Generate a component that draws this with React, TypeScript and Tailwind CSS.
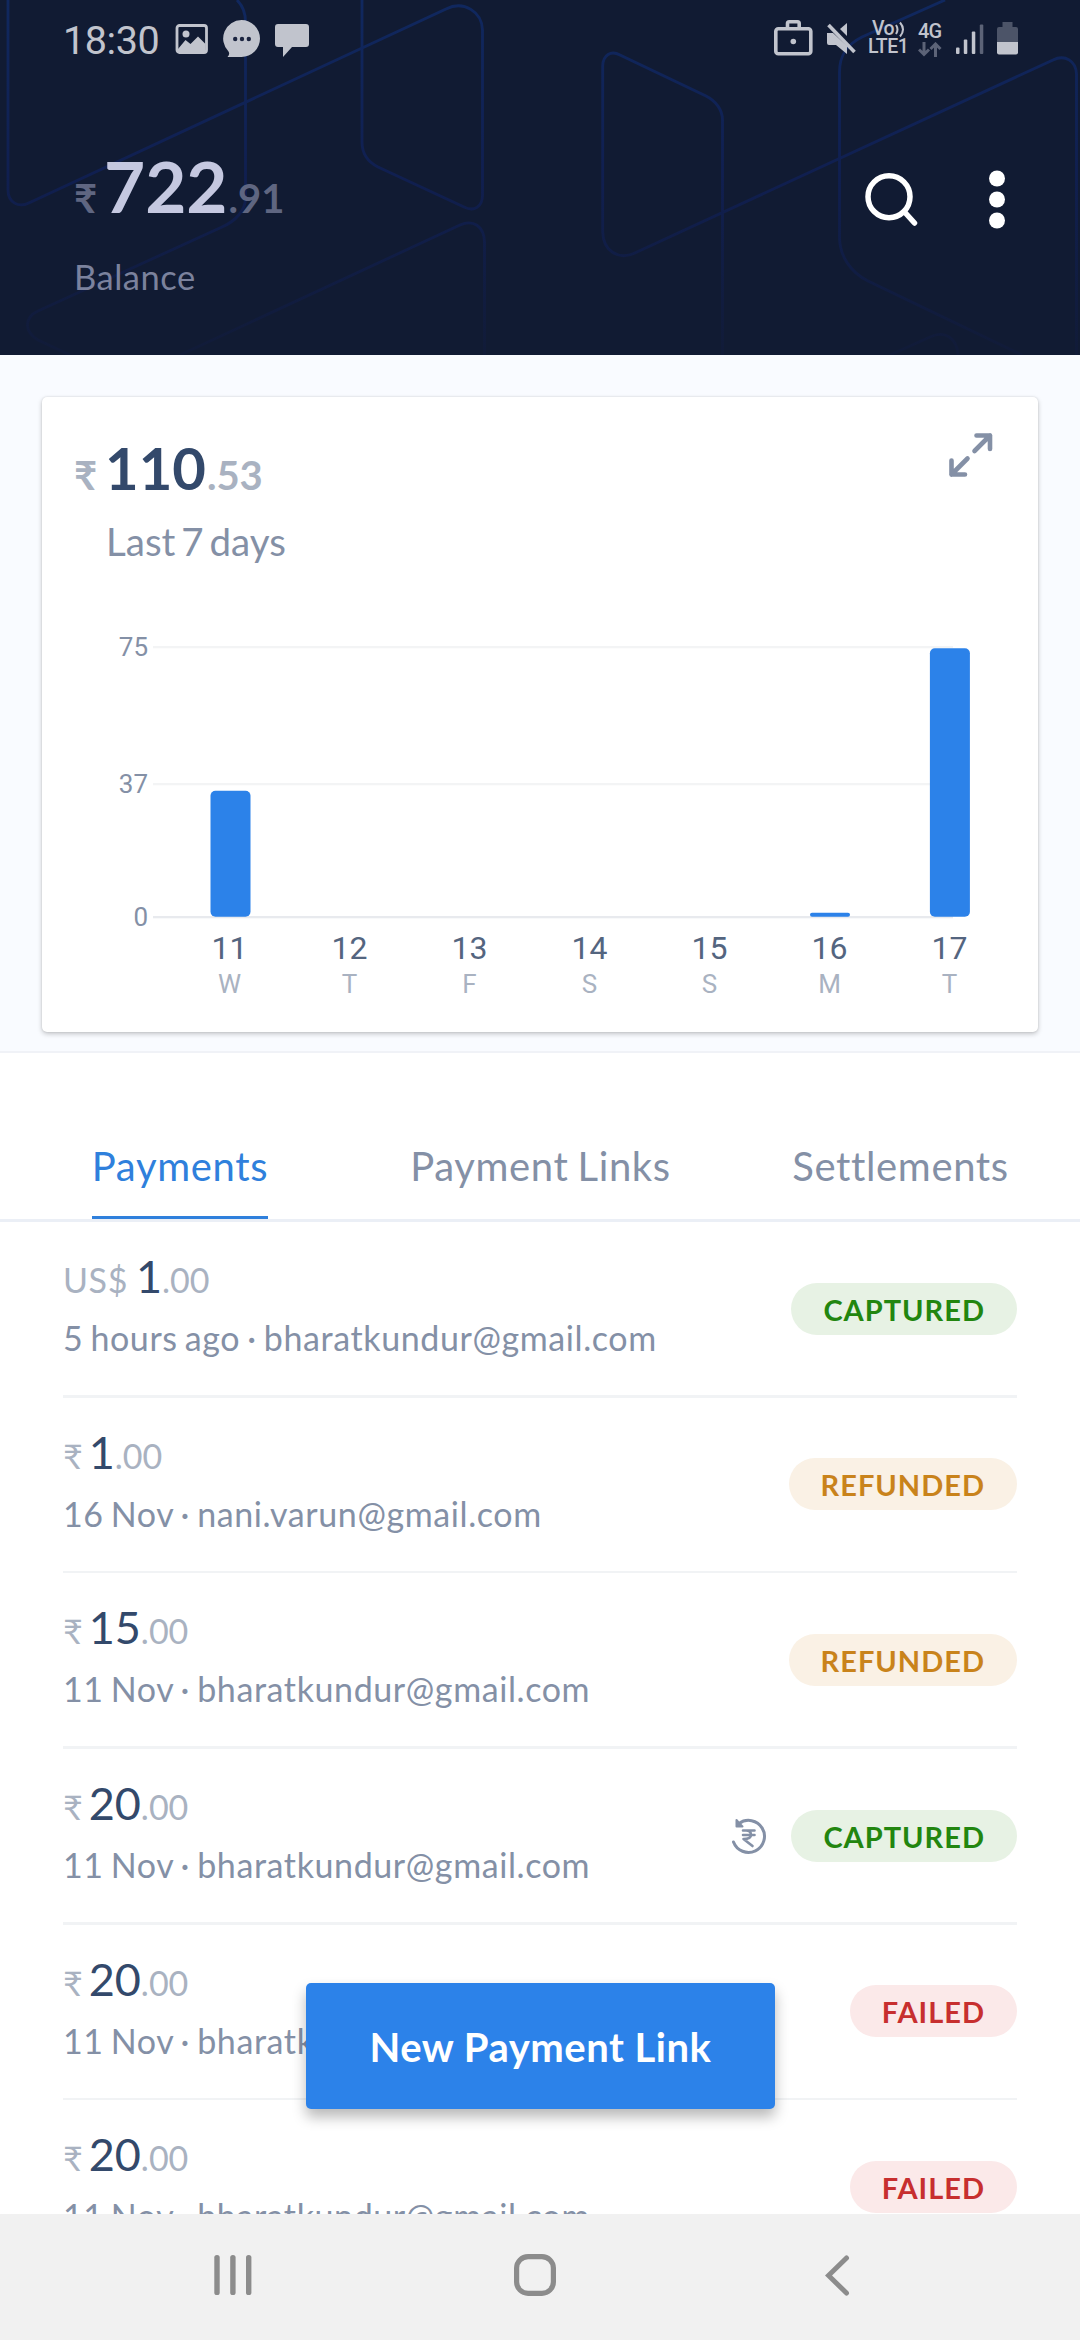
const days = [
  { date: "11", day: "W", height: 126 },
  { date: "12", day: "T", height: 0 },
  { date: "13", day: "F", height: 0 },
  { date: "14", day: "S", height: 0 },
  { date: "15", day: "S", height: 0 },
  { date: "16", day: "M", height: 4 },
  { date: "17", day: "T", height: 268.5 },
];

const gridLines = [
  { label: "75", y: 37, color: "#f3f4f5" },
  { label: "37", y: 174, color: "#f3f4f5" },
  { label: "0", y: 307, color: "#e8eaee" },
];

const payments = [
  { currency: "US$", amount: "1", when: "5 hours ago", email: "bharatkundur@gmail.com", status: "CAPTURED" },
  { currency: "₹", amount: "1", when: "16 Nov", email: "nani.varun@gmail.com", status: "REFUNDED" },
  { currency: "₹", amount: "15", when: "11 Nov", email: "bharatkundur@gmail.com", status: "REFUNDED" },
  { currency: "₹", amount: "20", when: "11 Nov", email: "bharatkundur@gmail.com", status: "CAPTURED", refund: true },
  { currency: "₹", amount: "20", when: "11 Nov", email: "bharatkundur@gmail.com", status: "FAILED" },
  { currency: "₹", amount: "20", when: "11 Nov", email: "bharatkundur@gmail.com", status: "FAILED" },
];

const badgeColors: Record<string, string> = {
  CAPTURED: "bg-[#e7f2e4] text-[#22860f]",
  REFUNDED: "bg-[#faf1e5] text-[#c9831b]",
  FAILED: "bg-[#fbe9e9] text-[#c72f2f]",
};

function HeaderPattern() {
  return (
    <svg className="absolute inset-0" width="1080" height="355" viewBox="0 0 1080 355" fill="none">
      <defs>
        <linearGradient id="fade" gradientUnits="userSpaceOnUse" x1="0" y1="0" x2="0" y2="355">
          <stop offset="0" stopColor="#10285f" />
          <stop offset="0.5" stopColor="#101f50" />
          <stop offset="1" stopColor="#111b38" />
        </linearGradient>
      </defs>
      <g stroke="url(#fade)" strokeWidth="2.8">
        <path d="M8 0V190C8 202 18 209 31 202L446 9C464 0 482 12 482.500 30V195C482.500 207 474 212 464 207L378 167C368 162 362 153 362 142V0" />
        <path d="M237 0C243 6 245.500 13 245.500 22V198C245.500 210 236 221 222 227L38 311C25 317 23 331 38 340L70 355" />
        <path d="M180 355L460 225C473 219 484 226 484.500 242V355" />
        <path d="M722.500 355V120C722.500 110 716 101 706 96L620 55C611 50 603 55 602.700 66V232C603 250 618 262 637 252L1053 60C1065 54 1076 61 1076.500 74V355" />
        <path d="M945 0L862 37C846 45 839.500 56 839.500 72V238C840 256 850 272 868 281L1022 355" />
        <path d="M890 355L930 337C945 330 957 338 958 355" />
      </g>
    </svg>
  );
}

function StatusBar() {
  return (
    <div className="relative flex h-20 items-start text-[#c1c4cd]">
      <span className="ml-[63px] w-[112px] font-[Roboto,sans-serif] text-[39.500px] leading-[81px] tracking-[-0.4px]">18:30</span>
      <svg className="mt-6 shrink-0" width="33" height="30" viewBox="0 0 33 30">
        <rect x="2" y="1.500" width="29.500" height="27" rx="2.500" fill="none" stroke="currentColor" strokeWidth="2.800" />
        <circle cx="11" cy="10" r="3.500" fill="currentColor" />
        <path d="M3 25L10.500 16L15.500 20L23 12.500L30.500 20V28H3Z" fill="currentColor" />
      </svg>
      <svg className="ml-[15px] mt-5 shrink-0" width="38" height="38" viewBox="0 0 38 38">
        <path d="M18.500 0A18.500 18.500 0 1 1 18.500 37H4.500C6.500 35 6.500 33 5.500 31.500A18.500 18.500 0 0 1 18.500 0Z" fill="currentColor" />
        <g fill="#1b2440">
          <circle cx="12.200" cy="19" r="2.200" />
          <circle cx="19" cy="19" r="2.200" />
          <circle cx="25.800" cy="19" r="2.200" />
        </g>
      </svg>
      <svg className="ml-[14px] mt-6 shrink-0" width="34" height="34" viewBox="0 0 34 34">
        <path d="M3 0H31Q34 0 34 3V20Q34 23 31 23H17L8 33V23H3Q0 23 0 20V3Q0 0 3 0Z" fill="currentColor" />
      </svg>

      <div className="mr-[62px] ml-auto flex">
        <svg className="mt-5 shrink-0" width="39" height="37" viewBox="0 0 39 37" fill="none" stroke="currentColor" strokeWidth="3.600">
          <rect x="1.800" y="8.800" width="35" height="25" rx="2.500" />
          <path d="M13.500 8V3.500Q13.500 1.800 15.200 1.800H23.500Q25.200 1.800 25.200 3.500V8" />
          <circle cx="19.300" cy="21.500" r="2.800" fill="currentColor" stroke="none" />
        </svg>
        <svg className="ml-[13px] mt-[22px] shrink-0" width="31" height="33" viewBox="0 0 31 33">
          <path d="M1 11H7L21 24V32L10 23H3Q1 23 1 21Z" fill="currentColor" />
          <path d="M21 1V14L14 7Z" fill="currentColor" />
          <path d="M2.500 3L28.500 30" stroke="currentColor" strokeWidth="3.600" />
        </svg>
        <div className="ml-[11px] mt-[20px] w-[40px] font-[Roboto,sans-serif] text-[19.500px] font-medium leading-[18px]">
          <div className="flex pl-[4px] tracking-[-0.6px]">
            Vo
            <svg className="ml-px mt-[1px]" width="11" height="17" viewBox="0 0 11 17" fill="none" stroke="currentColor" strokeWidth="2">
              <path d="M1 4Q4 8.500 1 13M5 1.500Q11 8.500 5 15.500" />
            </svg>
          </div>
          <div className="tracking-[-0.4px]">LTE1</div>
        </div>
        <div className="ml-[10px] mt-[22px] w-[24px] font-[Roboto,sans-serif] text-[20px] font-medium leading-[18px]">
          <div className="tracking-[-0.8px]">4G</div>
          <svg className="mt-[2px] text-[#5c6377]" width="24" height="15" viewBox="0 0 24 15" fill="none" stroke="currentColor" strokeWidth="3">
            <path d="M6 0V12M1 7.500L6 12.500L11 7.500M17.500 15V3M12.500 7L17.500 2L22.500 7" />
          </svg>
        </div>
        <svg className="ml-[14px] mt-6 shrink-0" width="28" height="31" viewBox="0 0 28 31" fill="currentColor">
          <rect x="0" y="23.500" width="3.500" height="6.500" rx="1" />
          <rect x="7.800" y="15.500" width="3.500" height="14.500" rx="1" />
          <rect x="15.800" y="7.500" width="3.500" height="22.500" rx="1" />
          <rect x="23.800" y="0.500" width="3.500" height="29.500" rx="1" fill="#5c6377" />
        </svg>
        <svg className="ml-[13px] mt-[22px] shrink-0" width="21" height="33" viewBox="0 0 21 33">
          <path d="M5.500 0H15.500V5H19Q21 5 21 7V20H0V7Q0 5 2 5H5.500Z" fill="#4c5468" />
          <path d="M0 20H21V30.500Q21 32.500 19 32.500H2Q0 32.500 0 30.500Z" fill="currentColor" />
        </svg>
      </div>
    </div>
  );
}

function Header() {
  return (
    <header className="relative h-[355px] shrink-0 overflow-hidden bg-[#111b33]">
      <HeaderPattern />
      <StatusBar />
      <div className="relative flex justify-between pt-[70px]">
        <div className="pl-[74px]">
          <div className="flex items-baseline font-bold leading-none text-[#5f6681]">
            <span className="w-[30px] text-[40px] leading-none">₹</span>
            <span className="text-[71px] leading-none text-[#c5c8e0]">722</span>
            <span className="pl-px text-[40px] leading-none">.91</span>
          </div>
          <div className="mt-[39px] text-[34.500px] leading-[34px] tracking-[0.5px] text-[#7b829d]">Balance</div>
        </div>
        <div className="flex pr-[74px] pt-[22px]">
          <svg width="54" height="54" viewBox="0 0 54 54" fill="none" stroke="white" strokeWidth="5.500">
            <ellipse cx="25" cy="24.700" rx="21" ry="21" />
            <path d="M41 40.500L50.500 51" strokeLinecap="round" />
          </svg>
          <svg className="ml-[70px] -mt-[3px]" width="18" height="62" viewBox="0 0 18 62" fill="white">
            <circle cx="9" cy="9.500" r="8" />
            <circle cx="9" cy="30.500" r="8" />
            <circle cx="9" cy="51.500" r="8" />
          </svg>
        </div>
      </div>
    </header>
  );
}

function Chart() {
  return (
    <svg className="mt-[48px]" width="996" height="400" viewBox="0 0 996 400" fontFamily="Roboto, sans-serif">
      {gridLines.map((line) => (
        <g key={line.label}>
          <rect x="111" y={line.y - 1} width="800" height="2.300" fill={line.color} />
          <text x="106" y={line.y + 9} textAnchor="end" fontSize="26" fill="#8490a6">{line.label}</text>
        </g>
      ))}
      {days.map((d, i) => (
        <g key={d.date} textAnchor="middle">
          {d.height > 0 && (
            <rect x={168.500 + i * 119.900} y={306.700 - d.height} width="40" height={d.height} rx={Math.min(5, d.height / 2)} fill="#2c82e9" />
          )}
          <text x={187.500 + i * 120} y="349" fontSize="32" fill="#54657f">{d.date}</text>
          <text x={187.500 + i * 120} y="382.700" fontSize="26" fill="#a9b2c1">{d.day}</text>
        </g>
      ))}
    </svg>
  );
}

function Summary() {
  return (
    <section className="h-[698px] shrink-0 border-b-2 border-[#f0f2f7] bg-[#f9fbff] px-[42px] pt-[42px]">
      <div className="relative h-[635px] rounded-[5px] bg-white pt-[41px] shadow-[0_2px_5px_rgba(0,0,0,0.22),0_0_2px_rgba(0,0,0,0.12)]">
        <div className="flex h-[59px] items-baseline pl-[32px] font-bold text-[#a9b2c1]">
          <span className="w-[31px] text-[40px] leading-none">₹</span>
          <span className="text-[58px] leading-[59px] text-[#33496b]">110</span>
          <span className="pl-px text-[40px] leading-none">.53</span>
        </div>
        <div className="mt-[24px] pl-[64px] text-[38.500px] leading-[41px] [word-spacing:-4px] text-[#8490a6]">Last 7 days</div>
        <Chart />
        <svg className="absolute top-[35px] right-[44px]" width="46" height="46" viewBox="0 0 46 46" fill="none" stroke="#8490a6" strokeWidth="4.600" strokeLinecap="round" strokeLinejoin="round">
          <path d="M28.500 3.500H42V17M42 3.500L26.500 19M3.500 28.500V42.500H17M3.500 42.500L19.500 26.500" />
        </svg>
      </div>
    </section>
  );
}

function Tabs() {
  return (
    <nav className="grid h-[169px] shrink-0 grid-cols-3 justify-items-center border-b-[3px] border-[#ebeff6] pt-[93px] text-[40px] leading-[40px] tracking-[0.65px] text-[#8490a6]">
      <span className="h-[73px] border-b-[3px] border-[#2f80dc] text-[#2f80dc]">Payments</span>
      <span className="pl-px [word-spacing:-2px]">Payment Links</span>
      <span className="pl-px">Settlements</span>
    </nav>
  );
}

function RefundIcon() {
  return (
    <svg className="mr-[24px]" width="36" height="36" viewBox="0 0 36 36" fill="none" stroke="#8490a6" strokeWidth="3" strokeLinecap="round" strokeLinejoin="round">
      <path d="M2.500 24A16 16 0 1 0 8 5.500" />
      <path d="M5.500 2V8.500H11.500L8 5Z" fill="#8490a6" strokeWidth="2" />
      <path d="M12 12.500H23.500M12 17H23.500M12 12.500H15Q20 12.500 20 17Q20 21 12.500 21L21.500 28" strokeWidth="2.600" />
    </svg>
  );
}

function PaymentRow({ payment }: { payment: (typeof payments)[number] }) {
  return (
    <div className="flex h-[175.700px] shrink-0 flex-col px-[63px]">
      <div className="flex flex-1 items-center justify-between">
        <div className="self-start pt-[32px]">
          <div className="flex items-baseline text-[34px] leading-none text-[#a9b2c1]">
            <span className={payment.currency === "₹" ? "mr-[6px]" : "mr-[8px] tracking-[0.6px]"}>{payment.currency}</span>
            <span>
              <span className="text-[45px] leading-none text-[#33496b]">{payment.amount}</span>.00
            </span>
          </div>
          <div className="mt-[22px] text-[34px] leading-[34px] tracking-[0.6px] [word-spacing:-2.2px] whitespace-nowrap text-[#8490a6]">
            {payment.when} · {payment.email}
          </div>
        </div>
        <div className="flex items-center">
          {payment.refund && <RefundIcon />}
          <span className={`h-[52px] rounded-full px-[32px] text-[29px] leading-[54px] font-bold tracking-[1px] ${badgeColors[payment.status]}`}>
            {payment.status}
          </span>
        </div>
      </div>
      <div className="h-[2.600px] bg-[#f1f3f5]" />
    </div>
  );
}

function NavigationBar() {
  return (
    <div className="relative flex h-[126px] shrink-0 items-center bg-[#f1f1f1] pb-[4px] pl-[214px]">
      <svg width="38" height="40" viewBox="0 0 38 40" fill="#8c8c8c">
        <rect x="0.300" width="5.400" height="40" rx="2.600" />
        <rect x="16.200" width="5.400" height="40" rx="2.600" />
        <rect x="32" width="5.400" height="40" rx="2.600" />
      </svg>
      <svg className="ml-[262px]" width="42" height="42" viewBox="0 0 42 42" fill="none" stroke="#8c8c8c" strokeWidth="5.200">
        <rect x="2.600" y="2.600" width="36.800" height="36.800" rx="11.500" />
      </svg>
      <svg className="ml-[269px]" width="25" height="41" viewBox="0 0 25 41" fill="none" stroke="#8c8c8c" strokeWidth="5" strokeLinecap="round">
        <path d="M21.500 3L3.500 20.500L21.500 38" />
      </svg>
    </div>
  );
}

export default function App() {
  return (
    <div className="relative flex h-[2340px] w-[1080px] flex-col overflow-hidden bg-white font-[Lato,'Noto_Sans',sans-serif]">
      <Header />
      <Summary />
      <Tabs />
      <main className="flex flex-1 flex-col overflow-hidden">
        {payments.map((payment, i) => (
          <PaymentRow key={i} payment={payment} />
        ))}
      </main>
      <NavigationBar />
      <button className="absolute top-[1983px] left-[306px] h-[126px] w-[469px] rounded-[5px] bg-[#2c82e9] pt-[2px] text-[40px] font-bold tracking-[0.5px] text-white shadow-[0_8px_14px_rgba(0,0,0,0.28)]">
        New Payment Link
      </button>
    </div>
  );
}
